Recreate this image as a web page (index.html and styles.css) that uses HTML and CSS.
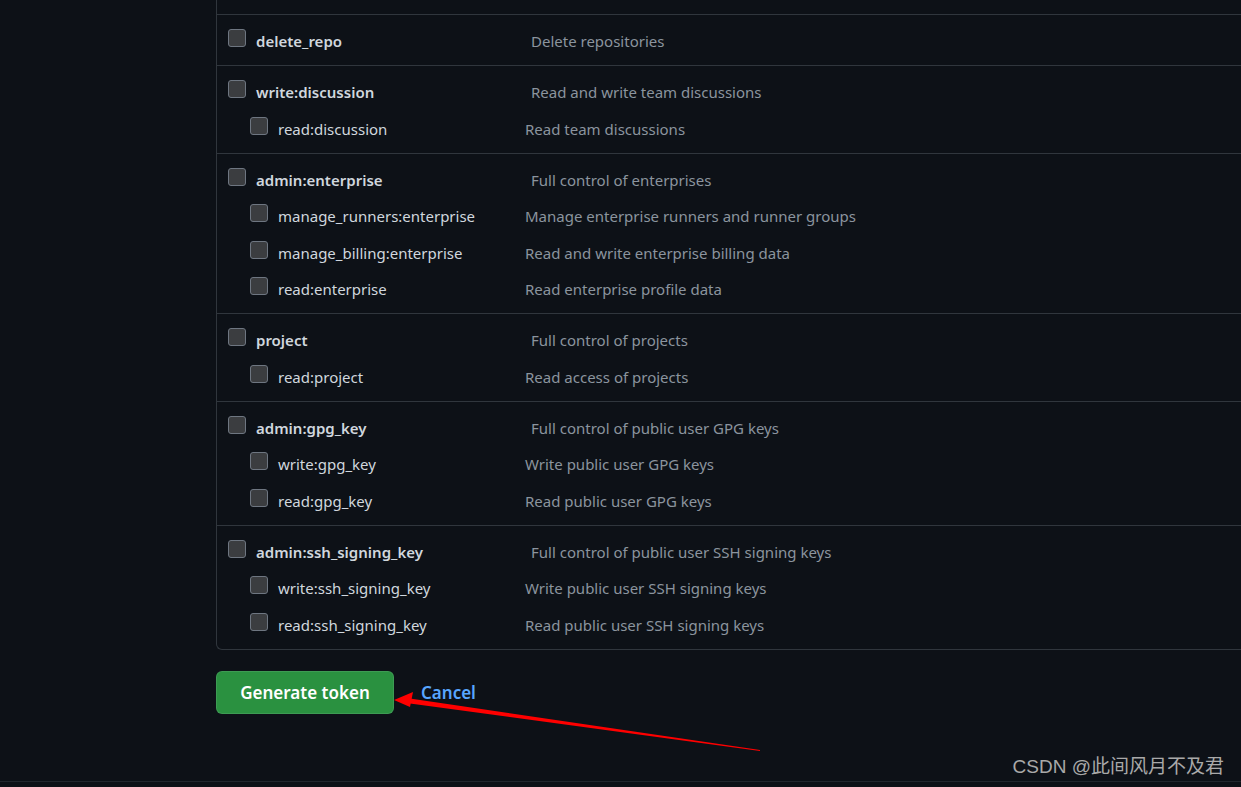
FILE: index.html
```html
<!DOCTYPE html>
<html lang="en">
<head>
<meta charset="utf-8">
<title>New token scopes</title>
<link rel="stylesheet" href="styles.css">
</head>
<body>
<div class="page">
  <div class="scopes">
    <div class="lead"></div>
    <div class="group">
      <div class="row top"><span class="check"></span><span class="name">delete_repo</span><span class="desc">Delete repositories</span></div>
    </div>
    <div class="group">
      <div class="row top"><span class="check"></span><span class="name">write:discussion</span><span class="desc">Read and write team discussions</span></div>
      <div class="row sub"><span class="check"></span><span class="name">read:discussion</span><span class="desc">Read team discussions</span></div>
    </div>
    <div class="group">
      <div class="row top"><span class="check"></span><span class="name">admin:enterprise</span><span class="desc">Full control of enterprises</span></div>
      <div class="row sub"><span class="check"></span><span class="name">manage_runners:enterprise</span><span class="desc">Manage enterprise runners and runner groups</span></div>
      <div class="row sub"><span class="check"></span><span class="name">manage_billing:enterprise</span><span class="desc">Read and write enterprise billing data</span></div>
      <div class="row sub"><span class="check"></span><span class="name">read:enterprise</span><span class="desc">Read enterprise profile data</span></div>
    </div>
    <div class="group">
      <div class="row top"><span class="check"></span><span class="name">project</span><span class="desc">Full control of projects</span></div>
      <div class="row sub"><span class="check"></span><span class="name">read:project</span><span class="desc">Read access of projects</span></div>
    </div>
    <div class="group">
      <div class="row top"><span class="check"></span><span class="name">admin:gpg_key</span><span class="desc">Full control of public user GPG keys</span></div>
      <div class="row sub"><span class="check"></span><span class="name">write:gpg_key</span><span class="desc">Write public user GPG keys</span></div>
      <div class="row sub"><span class="check"></span><span class="name">read:gpg_key</span><span class="desc">Read public user GPG keys</span></div>
    </div>
    <div class="group">
      <div class="row top"><span class="check"></span><span class="name">admin:ssh_signing_key</span><span class="desc">Full control of public user SSH signing keys</span></div>
      <div class="row sub"><span class="check"></span><span class="name">write:ssh_signing_key</span><span class="desc">Write public user SSH signing keys</span></div>
      <div class="row sub"><span class="check"></span><span class="name">read:ssh_signing_key</span><span class="desc">Read public user SSH signing keys</span></div>
    </div>
  </div>
  <div class="actions">
    <button class="btn-primary" type="button">Generate token</button>
    <a class="cancel" href="#">Cancel</a>
  </div>
</div>
<div class="footer"></div>
<svg class="arrow" width="1241" height="787" viewBox="0 0 1241 787" aria-hidden="true">
  <polygon points="760,750 760,751 410,703.5 410,698.5" fill="#ff0000"/>
  <polygon points="394,700 413,692 410,707" fill="#ff0000"/>
</svg>
<div class="watermark">CSDN @此间风月不及君</div>
</body>
</html>
```
FILE: styles.css
```css
html, body {
  margin: 0;
  padding: 0;
  background: #0d1117;
  height: 100%;
  overflow: hidden;
}
body {
  font-family: "Noto Sans", "Open Sans", sans-serif;
  color: #c9d1d9;
  font-size: 15px;
  position: relative;
}
.page {
  padding-left: 216px;
}
.scopes {
  border-left: 1px solid #30363d;
  border-bottom: 1px solid #30363d;
  border-bottom-left-radius: 6px;
  margin-right: -20px;
}
.lead {
  height: 14px;
}
.group {
  border-top: 1px solid #30363d;
  padding: 8px 0 5.5px;
}
.row {
  display: flex;
  align-items: center;
  height: 36.5px;
}
.row.top {
  padding-left: 11px;
}
.row.sub {
  padding-left: 33px;
}
.check {
  flex: none;
  box-sizing: border-box;
  width: 18px;
  height: 18px;
  border: 1px solid #6e7681;
  border-radius: 3px;
  background: #3b3d40;
  margin-right: 10px;
  margin-bottom: 6.5px;
}
.name {
  flex: none;
  line-height: 20px;
}
.row.top .name {
  width: 275px;
  font-weight: 600;
  color: #d0d7de;
}
.row.sub .name {
  width: 247px;
  color: #d0d7de;
}
.desc {
  color: #8b949e;
  line-height: 20px;
}
.actions {
  display: flex;
  align-items: center;
  margin-top: 21px;
  gap: 27px;
}
.btn-primary {
  font-family: inherit;
  width: 178px;
  height: 43px;
  border: 1px solid rgba(240, 246, 252, 0.1);
  border-radius: 6px;
  background: #2a9140;
  color: #ffffff;
  font-size: 17px;
  font-weight: 600;
  padding: 0;
}
.cancel {
  color: #58a6ff;
  font-size: 17px;
  font-weight: 600;
  text-decoration: none;
}
.footer {
  position: absolute;
  left: 0;
  right: 0;
  top: 781px;
  border-top: 1px solid #21262d;
}
.arrow {
  position: absolute;
  left: 0;
  top: 0;
  pointer-events: none;
}
.watermark {
  position: absolute;
  right: 17px;
  top: 753px;
  font-family: "Liberation Sans", "Noto Sans CJK SC", sans-serif;
  font-size: 19px;
  color: #a9a9a9;
  line-height: 28px;
}
```
